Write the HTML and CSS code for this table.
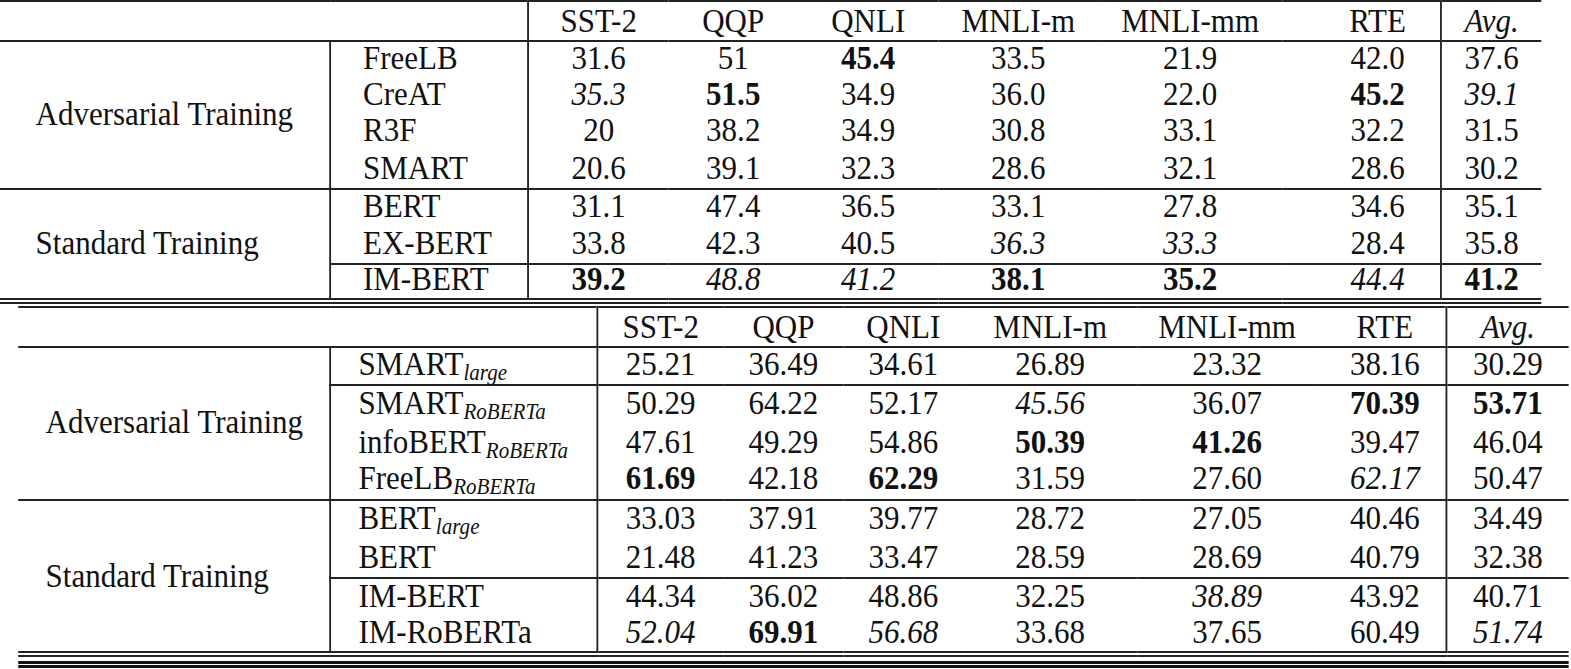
FILE: index.html
```html
<!DOCTYPE HTML>
<html>
<head>
	<meta http-equiv="Content-Type" content="text/html; charset=utf-8">
	<title>Adversarial robustness results</title>
	<link rel="stylesheet" href="styles.css">
</head>
<body>
<div class="sheet">
	<table class="res res-top">
		<colgroup>
			<col class="w-grp"><col class="w-meth"><col class="w-sst"><col class="w-qqp"><col class="w-qnli"><col class="w-mm"><col class="w-mmm"><col class="w-rte"><col class="w-avg">
		</colgroup>
		<thead>
			<tr class="head"><th colspan="2" class="vr"></th><th>SST-2</th><th>QQP</th><th>QNLI</th><th>MNLI-m</th><th>MNLI-mm</th><th class="rte">RTE</th><th class="avg"><i>Avg.</i></th></tr>
		</thead>
		<tbody>
			<tr class="r37"><td rowspan="4" class="grp sec">Adversarial Training</td><td class="meth">FreeLB</td><td>31.6</td><td>51</td><td><b>45.4</b></td><td>33.5</td><td>21.9</td><td class="rte">42.0</td><td class="avg">37.6</td></tr>
			<tr class="r37 up"><td class="meth">CreAT</td><td><i>35.3</i></td><td><b>51.5</b></td><td>34.9</td><td>36.0</td><td>22.0</td><td class="rte"><b>45.2</b></td><td class="avg"><i>39.1</i></td></tr>
			<tr class="r36 up"><td class="meth">R3F</td><td>20</td><td>38.2</td><td>34.9</td><td>30.8</td><td>33.1</td><td class="rte">32.2</td><td class="avg">31.5</td></tr>
			<tr class="r36 sec"><td class="meth">SMART</td><td>20.6</td><td>39.1</td><td>32.3</td><td>28.6</td><td>32.1</td><td class="rte">28.6</td><td class="avg">30.2</td></tr>
			<tr class="r37"><td rowspan="3" class="grp end">Standard Training</td><td class="meth">BERT</td><td>31.1</td><td>47.4</td><td>36.5</td><td>33.1</td><td>27.8</td><td class="rte">34.6</td><td class="avg">35.1</td></tr>
			<tr class="r36"><td class="meth">EX-BERT</td><td>33.8</td><td>42.3</td><td>40.5</td><td><i>36.3</i></td><td><i>33.3</i></td><td class="rte">28.4</td><td class="avg">35.8</td></tr>
			<tr class="r33 split end"><td class="meth">IM-BERT</td><td><b>39.2</b></td><td><i>48.8</i></td><td><i>41.2</i></td><td><b>38.1</b></td><td><b>35.2</b></td><td class="rte"><i>44.4</i></td><td class="avg"><b>41.2</b></td></tr>
		</tbody>
	</table>

	<table class="res res-low">
		<colgroup>
			<col class="w-grp"><col class="w-meth"><col class="w-sst"><col class="w-qqp"><col class="w-qnli"><col class="w-mm"><col class="w-mmm"><col class="w-rte"><col class="w-avg">
		</colgroup>
		<thead>
			<tr class="head"><th colspan="2" class="vr"></th><th>SST-2</th><th>QQP</th><th>QNLI</th><th>MNLI-m</th><th>MNLI-mm</th><th class="rte">RTE</th><th class="avg"><i>Avg.</i></th></tr>
		</thead>
		<tbody>
			<tr class="r36 cut"><td rowspan="4" class="grp sec">Adversarial Training</td><td class="meth">SMART<sub>large</sub></td><td>25.21</td><td>36.49</td><td>34.61</td><td>26.89</td><td>23.32</td><td class="rte">38.16</td><td class="avg">30.29</td></tr>
			<tr class="r38"><td class="meth">SMART<sub>RoBERTa</sub></td><td>50.29</td><td>64.22</td><td>52.17</td><td><i>45.56</i></td><td>36.07</td><td class="rte"><b>70.39</b></td><td class="avg"><b>53.71</b></td></tr>
			<tr class="r37 down"><td class="meth">infoBERT<sub>RoBERTa</sub></td><td>47.61</td><td>49.29</td><td>54.86</td><td><b>50.39</b></td><td><b>41.26</b></td><td class="rte">39.47</td><td class="avg">46.04</td></tr>
			<tr class="r38 sec"><td class="meth">FreeLB<sub>RoBERTa</sub></td><td><b>61.69</b></td><td>42.18</td><td><b>62.29</b></td><td>31.59</td><td>27.60</td><td class="rte"><i>62.17</i></td><td class="avg">50.47</td></tr>
			<tr class="r38"><td rowspan="4" class="grp end low">Standard Training</td><td class="meth">BERT<sub>large</sub></td><td>33.03</td><td>37.91</td><td>39.77</td><td>28.72</td><td>27.05</td><td class="rte">40.46</td><td class="avg">34.49</td></tr>
			<tr class="r38 cut down"><td class="meth">BERT</td><td>21.48</td><td>41.23</td><td>33.47</td><td>28.59</td><td>28.69</td><td class="rte">40.79</td><td class="avg">32.38</td></tr>
			<tr class="r36 down"><td class="meth">IM-BERT</td><td>44.34</td><td>36.02</td><td>48.86</td><td>32.25</td><td><i>38.89</i></td><td class="rte">43.92</td><td class="avg">40.71</td></tr>
			<tr class="r36 end down"><td class="meth">IM-RoBERTa</td><td><i>52.04</i></td><td><b>69.91</b></td><td><i>56.68</i></td><td>33.68</td><td>37.65</td><td class="rte">60.49</td><td class="avg"><i>51.74</i></td></tr>
		</tbody>
	</table>
	<div class="bottom-rule"></div>
</div>
</body>
</html>
```

FILE: styles.css
```css
html, body{
	overflow: hidden;
}
body{
	margin: 0;
	background: #fff;
	color: #111;
	font-family: "Liberation Serif", "Times New Roman", serif;
	font-size: 34px;
}
/* the source table is a little condensed: squeeze it sideways */
.sheet{
	width: 1720px;
	transform: scaleX(0.912);
	transform-origin: 0 0;
}
.res{
	border-collapse: collapse;
	table-layout: fixed;
	border-top: 2px solid #222;
}
.res th,
.res td{
	padding: 0;
	line-height: 28px;
	text-align: center;
	vertical-align: middle;
	font-weight: normal;
	white-space: nowrap;
}
.res td{
	padding-bottom: 5px;
}
.res td.grp{
	padding-bottom: 3px;
}
.res td.grp.low{
	padding-bottom: 0;
}
.res b{
	font-weight: bold;
}
.res .head th{
	height: 38px;
	border-bottom: 2px solid #222;
}
.res .vr{
	border-right: 2px solid #222;
}
.res .grp{
	text-align: left;
	border-right: 2px solid #222;
}
.res .meth{
	text-align: left;
	border-right: 2px solid #222;
}
.res .avg{
	border-left: 2px solid #222;
}
.res tr.sec td,
.res td.grp.sec{
	border-bottom: 2px solid #222;
}
.res tr.cut td{
	border-bottom: 2px solid #222;
}
.res tr.split td{
	border-top: 2px solid #222;
}
.res tr.end td,
.res td.grp.end{
	border-bottom: 6px double #222;
}
.r33 td{ height: 28px; }
.r36 td{ height: 31px; }
.r37 td{ height: 32px; }
.r38 td{ height: 33px; }

/* nudge text inside a row without changing its height */
.res tr.up td{
	padding-bottom: 8px;
	height: 29px;
}
.res tr.r36.up td{
	height: 28px;
}
.res tr.down td{
	padding-bottom: 2px;
}
.res tr.r36.down td{ height: 34px; }
.res tr.r37.down td{ height: 35px; }
.res tr.r38.down td{ height: 36px; }

.res sub{
	font-size: 0.68em;
	font-style: italic;
	vertical-align: -0.2em;
	line-height: 0;
}

/* upper table */
.res-top{
	width: 1690px;
}
.res-top .w-grp{ width: 362px; }
.res-top .w-meth{ width: 217px; }
.res-top .w-sst{ width: 154px; }
.res-top .w-qqp{ width: 142px; }
.res-top .w-qnli{ width: 154px; }
.res-top .w-mm{ width: 175px; }
.res-top .w-mmm{ width: 202px; }
.res-top .w-rte{ width: 174px; }
.res-top .w-avg{ width: 110px; }
.res-top .grp{ padding-left: 39px; }
.res-top .meth{ padding-left: 35px; }
.res-top .rte{ padding-left: 36px; }

/* lower table */
.res-low{
	width: 1700px;
	margin: 2px 0 0 20px;
}
.res-low .w-grp{ width: 342px; }
.res-low .w-meth{ width: 293px; }
.res-low .w-sst{ width: 138px; }
.res-low .w-qqp{ width: 132px; }
.res-low .w-qnli{ width: 131px; }
.res-low .w-mm{ width: 191px; }
.res-low .w-mmm{ width: 197px; }
.res-low .w-rte{ width: 142px; }
.res-low .w-avg{ width: 134px; }
.res-low .grp{ padding-left: 30px; }
.res-low .meth{ padding-left: 30px; }
.res-low .rte{ padding-left: 8px; }

.bottom-rule{
	margin: 4px 0 0 20px;
	width: 1700px;
	height: 1px;
	border-top: 3px solid #111;
	border-bottom: 3px solid #111;
}
```
